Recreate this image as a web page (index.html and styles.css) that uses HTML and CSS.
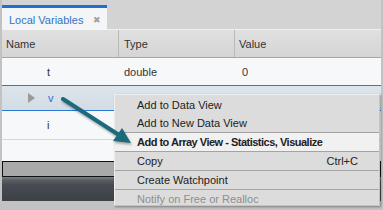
FILE: index.html
```html
<!DOCTYPE html>
<html>
<head>
<meta charset="utf-8">
<link rel="stylesheet" href="styles.css">
</head>
<body>
<div class="frame">
  <div class="tabstrip">
    <div class="tab">
      <span class="tab-label">Local Variables</span>
      <span class="tab-close">&#10006;</span>
    </div>
  </div>
  <div class="table">
    <div class="row head">
      <div class="cell c1">Name</div>
      <div class="cell c2">Type</div>
      <div class="cell c3">Value</div>
    </div>
    <div class="row r-t">
      <div class="cell c1 name">t</div>
      <div class="cell c2">double</div>
      <div class="cell c3">0</div>
    </div>
    <div class="row r-v">
      <div class="cell c1 name sel"><span class="twisty"></span>v</div>
      <div class="cell c2"></div>
      <div class="cell c3"></div>
    </div>
    <div class="row r-i">
      <div class="cell c1 name">i</div>
      <div class="cell c2"></div>
      <div class="cell c3"></div>
    </div>
    <div class="row r-empty"></div>
    <div class="hscroll"></div>
    <div class="darkbar"></div>
  </div>

  <div class="menu">
    <div class="mi short">Add to Data View</div>
    <div class="mi short">Add to New Data View</div>
    <div class="mi sep hl">Add to Array View - Statistics, Visualize</div>
    <div class="mi sep"><span>Copy</span><span class="key">Ctrl+C</span></div>
    <div class="mi sep">Create Watchpoint</div>
    <div class="mi sep dis">Notify on Free or Realloc</div>
  </div>

  <svg class="arrow" width="383" height="210" viewBox="0 0 383 210">
    <line x1="63" y1="99" x2="119" y2="135" stroke="#1b6b7d" stroke-width="4" stroke-linecap="round"/>
    <polygon points="131,143 113,141 122,128" fill="#1b6b7d"/>
  </svg>
</div>
</body>
</html>
```
FILE: styles.css
```css
html, body {
  margin: 0;
  padding: 0;
}
body {
  width: 383px;
  height: 210px;
  overflow: hidden;
}
.frame {
  position: relative;
  width: 383px;
  height: 210px;
  box-sizing: border-box;
  padding: 0 2px 0 2px;
  background: #c2c2c2;
  overflow: hidden;
  font-family: "Liberation Sans", Arial, sans-serif;
  font-size: 11px;
  color: #333;
}
.tabstrip {
  height: 30px;
  box-sizing: border-box;
  padding-top: 5px;
  background: #d3d3d3;
  border-bottom: 1px solid #eef0f2;
  display: flex;
  align-items: flex-start;
}
.tab {
  width: 105px;
  height: 26px;
  box-sizing: border-box;
  border-top: 3px solid #1e6fd2;
  background: #f3f5f7;
  display: flex;
  align-items: center;
  padding-left: 7px;
  padding-top: 1px;
}
.tab-label {
  color: #2f73c6;
}
.tab-close {
  margin-left: 10px;
  font-size: 9px;
  color: #a0a0a0;
}
.table {
  display: flex;
  flex-direction: column;
}
.row {
  display: flex;
  box-sizing: border-box;
}
.cell {
  display: flex;
  align-items: center;
  box-sizing: border-box;
  padding-left: 5px;
}
.c1 { width: 117px; }
.c2 { width: 116px; }
.c3 { flex: 1; }
.head {
  height: 28px;
  background: linear-gradient(#e0e0e0, #d5d5d5);
  border-bottom: 1px solid #a6a6a6;
}
.head .c1, .head .c2 {
  border-right: 1px solid #b9b9b9;
}
.head .c1 { padding-left: 4px; }
.head .c3 { padding-left: 4px; }
.r-t {
  height: 28px;
  background: #f7f8fa;
  border-bottom: 1px solid #2a7ad6;
}
.r-t .c3 { padding-left: 7px; }
.name {
  padding-left: 45px;
}
.r-v {
  height: 25px;
  background: linear-gradient(#dde5ec, #d3dce4);
  border-bottom: 1px solid #2a7ad6;
}
.sel {
  padding-left: 26px;
  color: #2b6fd0;
}
.twisty {
  width: 0;
  height: 0;
  border-top: 5px solid transparent;
  border-bottom: 5px solid transparent;
  border-left: 7px solid #9a9a9a;
  margin-right: 13px;
}
.r-i {
  height: 29px;
  background: #f7f8fa;
  border-bottom: 1px solid #d6d8da;
}
.r-empty {
  height: 21px;
  background: #f7f8fa;
}
.hscroll {
  height: 16px;
  box-sizing: border-box;
  border: 1px solid #111;
  background: #a9a9a9;
}
.darkbar {
  height: 24px;
  background: linear-gradient(#7d8187 0, #5a5f66 3px, #474c53 8px, #3c4148 100%);
}
.menu {
  position: absolute;
  left: 114px;
  top: 94px;
  width: 266px;
  height: 112px;
  box-sizing: border-box;
  background: #dcdcdc;
  border: 1px solid #c4c4c4;
  border-top-color: #efefef;
  border-left-color: #efefef;
  box-shadow: 1px 1px 2px rgba(0,0,0,0.35);
  padding-top: 1px;
  overflow: hidden;
}
.mi {
  height: 19px;
  box-sizing: border-box;
  padding-left: 22px;
  padding-right: 21px;
  display: flex;
  align-items: center;
  justify-content: space-between;
  color: #222;
}
.mi.short {
  height: 18px;
}
.mi.sep {
  border-top: 1px solid #a3a3a3;
}
.mi.hl {
  background: #f1f1f1;
  font-weight: bold;
  letter-spacing: -0.5px;
}
.mi.dis {
  color: #8e8e8e;
}
.key {
  color: #222;
}
.arrow {
  position: absolute;
  left: 0;
  top: 0;
  filter: drop-shadow(1px 2px 1px rgba(0,0,0,0.3));
}
```
